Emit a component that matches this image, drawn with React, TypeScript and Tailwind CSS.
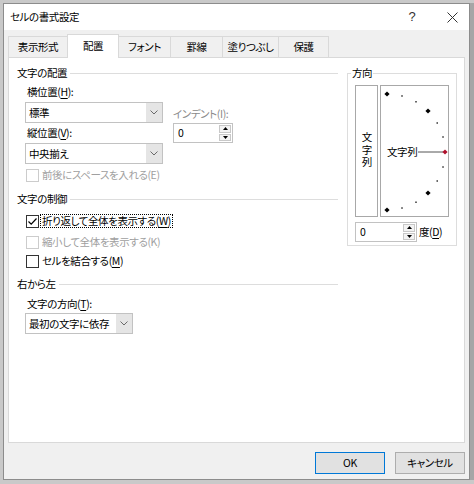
import React from "react";

const Chevron = () => (
  <svg width="8" height="5" viewBox="0 0 8 5">
    <polyline points="0.5,0.5 4,4 7.5,0.5" fill="none" stroke="#6a6a6a" strokeWidth="1" />
  </svg>
);

const Select = ({ text, w }: { text: string; w: string }) => (
  <div className={`${w} h-[21px] border border-[#c2c2c2] bg-white flex`}>
    <div className="flex-1 flex items-center pl-[3px] text-[10.5px] leading-[14px] whitespace-nowrap">{text}</div>
    <div className="w-[16px] h-full bg-[#e5e5e5] flex items-center justify-center">
      <Chevron />
    </div>
  </div>
);

const Spin = ({ w }: { w: string }) => (
  <div className={`${w} h-[20px] border border-[#c2c2c2] bg-white flex`}>
    <div className="flex-1 flex items-center pl-[4px] text-[10.5px] leading-[14px]">0</div>
    <div className="w-[14px] h-full flex flex-col p-[1px] gap-px">
      <div className="flex-1 border border-[#c8c8c8] bg-[#f3f3f3] flex items-center justify-center">
        <svg width="5" height="3" viewBox="0 0 5 3">
          <polygon points="0,3 2.5,0 5,3" fill="#000" />
        </svg>
      </div>
      <div className="flex-1 border border-[#c8c8c8] bg-[#f3f3f3] flex items-center justify-center">
        <svg width="5" height="3" viewBox="0 0 5 3">
          <polygon points="0,0 2.5,3 5,0" fill="#000" />
        </svg>
      </div>
    </div>
  </div>
);

const Checkbox = ({ checked, disabled }: { checked?: boolean; disabled?: boolean }) => (
  <div
    className={`w-[13px] h-[13px] shrink-0 border bg-white flex items-center justify-center ${
      disabled ? "border-[#cccccc]" : "border-[#333333]"
    }`}
  >
    {checked && (
      <svg width="11" height="11" viewBox="0 0 11 11">
        <path d="M1.5 5.5 L4.2 8.2 L9.5 2.5" fill="none" stroke="#000" strokeWidth="1.2" />
      </svg>
    )}
  </div>
);

const Header = ({ text, mt }: { text: string; mt: string }) => (
  <div className={`${mt} h-[14px] flex items-center`}>
    <span className="text-[10.5px] leading-[14px] text-black">{text}</span>
    <div className="flex-1 h-px bg-[#dddddd] ml-[3px]" />
  </div>
);

const CbRow = ({
  mt,
  checked,
  disabled,
  focused,
  children,
}: {
  mt: string;
  checked?: boolean;
  disabled?: boolean;
  focused?: boolean;
  children: React.ReactNode;
}) => (
  <div className={`${mt} h-[14px] flex items-center ml-[9px]`}>
    <Checkbox checked={checked} disabled={disabled} />
    <span
      className={`ml-[1px] px-[1px] h-[14px] flex items-center text-[10.5px] leading-[12px] whitespace-nowrap border ${
        focused ? "border-dotted border-[#000]" : "border-transparent"
      } ${disabled ? "text-[#a0a0a0]" : "text-black"}`}
    >
      {children}
    </span>
  </div>
);

const U = ({ c }: { c: string }) => <span className="underline underline-offset-2">{c}</span>;

const Dial = () => {
  const cx = 6;
  const cy = 66;
  const r = 58;
  const small = [75, 60, 30, 15, -15, -30, -60, -75];
  const big = [90, 45, -45, -90];
  const pt = (a: number) => {
    const rad = (a * Math.PI) / 180;
    return [cx + r * Math.cos(rad), cy - r * Math.sin(rad)];
  };
  return (
    <svg width="67" height="130" viewBox="0 0 67 130">
      {small.map((a) => {
        const [x, y] = pt(a);
        return <rect key={a} x={x - 0.75} y={y - 0.75} width="1.5" height="1.5" fill="#333" />;
      })}
      {big.map((a) => {
        const [x, y] = pt(a);
        return (
          <path
            key={a}
            d={`M${x} ${y - 2.6} L${x + 2.6} ${y} L${x} ${y + 2.6} L${x - 2.6} ${y} Z`}
            fill="#000"
          />
        );
      })}
      <line x1="37" y1={cy} x2="62" y2={cy} stroke="#555" strokeWidth="1" />
      <path d={`M64 ${cy - 2.6} L66.6 ${cy} L64 ${cy + 2.6} L61.4 ${cy} Z`} fill="#b0102c" />
      <text
        x="6"
        y={cy + 4}
        fontSize="10.5"
        fill="#000"
        style={{ fontFamily: '"Noto Sans CJK JP", sans-serif', fontFeatureSettings: '"palt"' }}
      >
        文字列
      </text>
    </svg>
  );
};

export default function App() {
  const tabs = [
    { t: "表示形式", w: "w-[60px]" },
    { t: "配置", w: "w-[52px]", sel: true },
    { t: "フォント", w: "w-[53px]" },
    { t: "罫線", w: "w-[53px]" },
    { t: "塗りつぶし", w: "w-[57px]" },
    { t: "保護", w: "w-[51px]" },
  ];
  return (
    <div className="w-[474px] h-[484px] overflow-hidden bg-[#c9c9c9] pt-[3px] pl-[3px] font-['Noto_Sans_CJK_JP','Noto_Sans',sans-serif] [font-feature-settings:'palt'] tracking-[-0.4px] text-black">
      <div className="flex">
        <div className="w-[467px] h-[477px] border border-[#8c8c8c] bg-[#f0f0f0] flex flex-col shrink-0">
          {/* Title bar */}
          <div className="h-[26px] bg-white flex items-center pl-[6px] shrink-0">
            <span className="text-[10.5px] leading-[14px]">セルの書式設定</span>
            <span className="ml-auto w-[20px] text-center text-[13px] leading-[14px] text-[#333] font-['Liberation_Sans',sans-serif]">
              ?
            </span>
            <div className="ml-[24px] mr-[11px] w-[12px] h-[12px] flex items-center justify-center">
              <svg width="11" height="11" viewBox="0 0 11 11">
                <path d="M0.5 0.5 L10.5 10.5 M10.5 0.5 L0.5 10.5" stroke="#333" strokeWidth="1" />
              </svg>
            </div>
          </div>
          {/* Tabs */}
          <div className="mt-[4px] h-[24px] px-[4px] flex items-end -mb-px shrink-0">
            {tabs.map((tab, i) => (
              <div
                key={tab.t}
                className={`${tab.w} ${i > 0 ? "-ml-px" : ""} border-t border-l border-r border-[#d9d9d9] flex items-center justify-center text-[10.5px] leading-[14px] ${
                  tab.sel ? "h-[24px] bg-white relative z-10 pb-[2px]" : "h-[22px] bg-[#f0f0f0] pb-px"
                }`}
              >
                {tab.t}
              </div>
            ))}
          </div>
          {/* Panel */}
          <div className="mx-[4px] h-[386px] border border-[#d9d9d9] bg-white flex pt-[8px] pl-[8px] shrink-0">
            {/* Left column */}
            <div className="w-[321px] flex flex-col">
              <Header text="文字の配置" mt="mt-0" />
              <div className="mt-[5px] flex">
                <div className="ml-[8px] w-[138px] flex flex-col">
                  <div className="h-[14px] pl-[2px] text-[10.5px] leading-[14px]">
                    横位置(<U c="H" />):
                  </div>
                  <div className="mt-[3px]">
                    <Select text="標準" w="w-[138px]" />
                  </div>
                  <div className="mt-[3px] h-[14px] pl-[2px] text-[10.5px] leading-[14px]">
                    縦位置(<U c="V" />):
                  </div>
                  <div className="mt-[3px]">
                    <Select text="中央揃え" w="w-[138px]" />
                  </div>
                </div>
                <div className="ml-[10px] flex flex-col">
                  <div className="mt-[22px] h-[14px] text-[10.5px] leading-[14px] text-[#8a8a8a]">インデント(I):</div>
                  <div className="mt-[2px]">
                    <Spin w="w-[60px]" />
                  </div>
                </div>
              </div>
              <CbRow mt="mt-[4px]" disabled>
                前後にスペースを入れる(E)
              </CbRow>
              <Header text="文字の制御" mt="mt-[10px]" />
              <CbRow mt="mt-[8px]" checked focused>
                折り返して全体を表示する(<U c="W" />)
              </CbRow>
              <CbRow mt="mt-[7px]" disabled>
                縮小して全体を表示する(K)
              </CbRow>
              <CbRow mt="mt-[5px]">
                セルを結合する(<U c="M" />)
              </CbRow>
              <Header text="右から左" mt="mt-[9px]" />
              <div className="mt-[6px] h-[14px] pl-[10px] text-[10.5px] leading-[14px]">
                文字の方向(<U c="T" />):
              </div>
              <div className="mt-[2px] ml-[8px]">
                <Select text="最初の文字に依存" w="w-[108px]" />
              </div>
            </div>
            {/* Right group: 方向 */}
            <div className="ml-[9px] w-[110px] flex flex-col">
              <div className="h-[14px] flex">
                <div className="w-[4px] h-[7px] self-end border-l border-t border-[#dddddd]" />
                <span className="px-[1px] text-[10.5px] leading-[14px]">方向</span>
                <div className="flex-1 h-[7px] self-end border-r border-t border-[#dddddd]" />
              </div>
              <div className="border-l border-r border-b border-[#dddddd] pt-[5px] pl-[7px] pb-[3px]">
                <div className="flex">
                  <div className="w-[23px] h-[132px] border border-[#a8a8a8] bg-white flex items-center justify-center">
                    <span className="[writing-mode:vertical-rl] text-[10.5px] leading-[14px] tracking-[2px]">
                      文字列
                    </span>
                  </div>
                  <div className="ml-[2px] w-[69px] h-[132px] border border-[#a8a8a8] bg-white">
                    <Dial />
                  </div>
                </div>
                <div className="mt-[5px] flex items-center">
                  <Spin w="w-[62px]" />
                  <span className="ml-[2px] text-[10.5px] leading-[14px]">
                    度(<U c="D" />)
                  </span>
                </div>
              </div>
            </div>
          </div>
          {/* Buttons */}
          <div className="mt-[9px] px-[4px] flex justify-end gap-[10px]">
            <div className="w-[70px] h-[22px] border border-[#0078d7] bg-[#e1e1e1] flex items-center justify-center text-[10.5px] leading-[14px]">
              OK
            </div>
            <div className="w-[70px] h-[22px] border border-[#adadad] bg-[#e1e1e1] flex items-center justify-center text-[10.5px] leading-[14px]">
              キャンセル
            </div>
          </div>
        </div>
        <div className="w-[4px] h-[477px] bg-[#a6a6a6]" />
      </div>
    </div>
  );
}
